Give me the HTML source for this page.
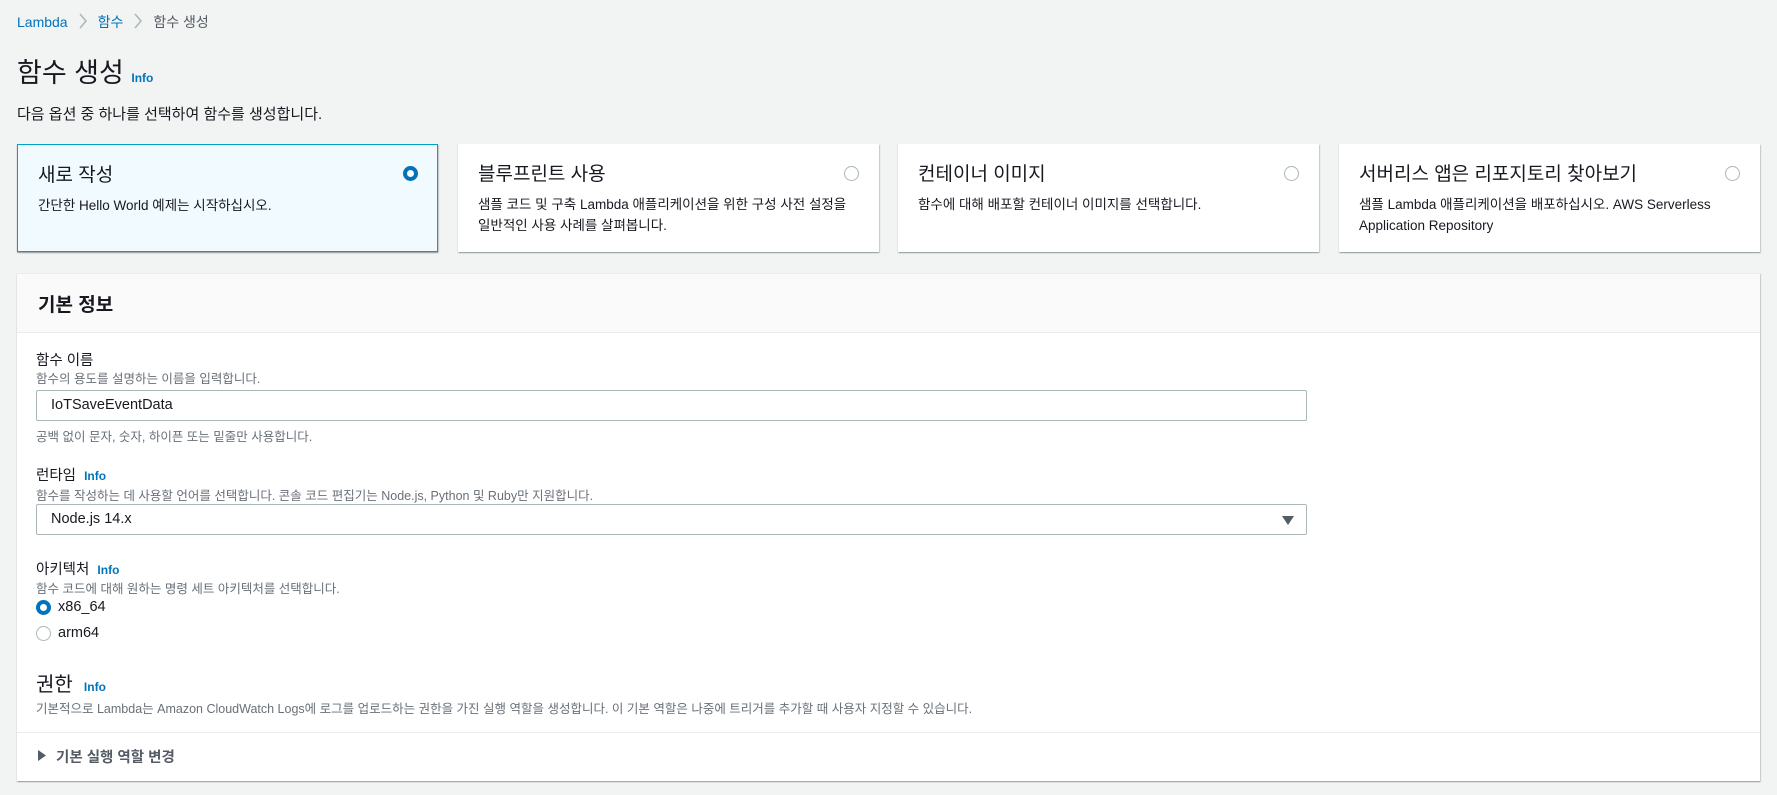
<!DOCTYPE html>
<html><head><meta charset="utf-8"><style>
*{box-sizing:border-box;margin:0;padding:0}
body{width:1777px;height:795px;background:#f2f3f3;font-family:"Liberation Sans","Noto Sans CJK KR",sans-serif;color:#16191f;position:relative;overflow:hidden}
.a{position:absolute;white-space:nowrap}
.info{color:#0073bb;font-weight:bold;font-size:12px}
.card{position:absolute;top:144px;width:421px;height:108px;background:#fff;box-shadow:0 1px 1px rgba(0,28,36,.3),1px 1px 1px rgba(0,28,36,.15);}
.card.sel{background:#f1faff;border:1px solid #00a1c9}
.card .t{position:absolute;left:20px;top:15px;font-size:19px}
.card .d{position:absolute;left:20px;top:50px;font-size:13.5px;line-height:21px;width:380px;white-space:normal;word-break:break-all}
.rad{position:absolute;width:15px;height:15px;border-radius:50%;border:1px solid #aab7b8;background:#fff}
.rad.on{border:4px solid #0073bb}
.desc{font-size:12.5px;color:#687078}
.lab{font-size:14.5px}
.inp{position:absolute;left:36px;width:1271px;height:31px;border:1px solid #aab7b8;border-radius:2px;background:#fff;font-size:14.5px;padding:6px 0 0 14px}
.sep{display:inline-block;margin:0 10px;vertical-align:-2px}
</style></head><body>
<div class="a" style="left:17px;top:12px;font-size:14px"><span style="color:#0073bb">Lambda</span><svg class="sep" width="10" height="16"><path d="M2 1L8 8L2 15" fill="none" stroke="#aab7b8" stroke-width="1.5"/></svg><span style="color:#0073bb">함수</span><svg class="sep" width="10" height="16"><path d="M2 1L8 8L2 15" fill="none" stroke="#aab7b8" stroke-width="1.5"/></svg><span style="color:#545b64">함수 생성</span></div>
<div class="a" style="left:17px;top:51px;font-size:27px">함수 생성 <span class="info" style="font-size:12px">Info</span></div>
<div class="a" style="left:17px;top:103px;font-size:15px">다음 옵션 중 하나를 선택하여 함수를 생성합니다.</div>

<div class="card sel" style="left:17px"><div class="t">새로 작성</div><div class="d">간단한 Hello World 예제는 시작하십시오.</div><div class="rad on" style="left:385px;top:21px"></div></div>
<div class="card" style="left:458px"><div class="t">블루프린트 사용</div><div class="d">샘플 코드 및 구축 Lambda 애플리케이션을 위한 구성 사전 설정을 일반적인 사용 사례를 살펴봅니다.</div><div class="rad" style="left:386px;top:22px"></div></div>
<div class="card" style="left:898px"><div class="t">컨테이너 이미지</div><div class="d">함수에 대해 배포할 컨테이너 이미지를 선택합니다.</div><div class="rad" style="left:386px;top:22px"></div></div>
<div class="card" style="left:1339px"><div class="t">서버리스 앱은 리포지토리 찾아보기</div><div class="d" style="word-break:normal">샘플 Lambda 애플리케이션을 배포하십시오. AWS Serverless Application Repository</div><div class="rad" style="left:386px;top:22px"></div></div>

<div style="position:absolute;left:17px;top:273px;width:1743px;height:508px;background:#fff;box-shadow:0 1px 1px rgba(0,28,36,.3),1px 1px 1px rgba(0,28,36,.15);border-top:1px solid #eaeded">
<div style="height:59px;background:#fafafa;border-bottom:1px solid #eaeded"></div>
</div>
<div class="a" style="left:38px;top:290px;font-size:19px;font-weight:bold">기본 정보</div>
<div class="a lab" style="left:36px;top:349px">함수 이름</div>
<div class="a desc" style="left:36px;top:368px">함수의 용도를 설명하는 이름을 입력합니다.</div>
<div class="inp" style="top:390px">IoTSaveEventData</div>
<div class="a desc" style="left:36px;top:426px">공백 없이 문자, 숫자, 하이픈 또는 밑줄만 사용합니다.</div>
<div class="a lab" style="left:36px;top:464px">런타임 &nbsp;<span class="info">Info</span></div>
<div class="a desc" style="left:36px;top:485px">함수를 작성하는 데 사용할 언어를 선택합니다. 콘솔 코드 편집기는 Node.js, Python 및 Ruby만 지원합니다.</div>
<div class="inp" style="top:504px">Node.js 14.x<svg style="position:absolute;right:12px;top:11px" width="12" height="9"><path d="M0 0H12L6 9Z" fill="#545b64"/></svg></div>
<div class="a lab" style="left:36px;top:558px">아키텍처 &nbsp;<span class="info">Info</span></div>
<div class="a desc" style="left:36px;top:578px">함수 코드에 대해 원하는 명령 세트 아키텍처를 선택합니다.</div>
<div class="rad on" style="left:36px;top:600px"></div><div class="a lab" style="left:58px;top:599px">x86_64</div>
<div class="rad" style="left:36px;top:626px"></div><div class="a lab" style="left:58px;top:625px">arm64</div>
<div class="a" style="left:36px;top:668px;font-size:20px">권한 &nbsp;<span class="info">Info</span></div>
<div class="a desc" style="left:36px;top:698px">기본적으로 Lambda는 Amazon CloudWatch Logs에 로그를 업로드하는 권한을 가진 실행 역할을 생성합니다. 이 기본 역할은 나중에 트리거를 추가할 때 사용자 지정할 수 있습니다.</div>
<div style="position:absolute;left:17px;top:732px;width:1743px;height:1px;background:#eaeded"></div>
<svg style="position:absolute;left:38px;top:750px" width="8" height="11"><path d="M0 0L8 5.5L0 11Z" fill="#545b64"/></svg>
<div class="a" style="left:56px;top:746px;font-size:14.5px;font-weight:bold;color:#545b64">기본 실행 역할 변경</div>
</body></html>
